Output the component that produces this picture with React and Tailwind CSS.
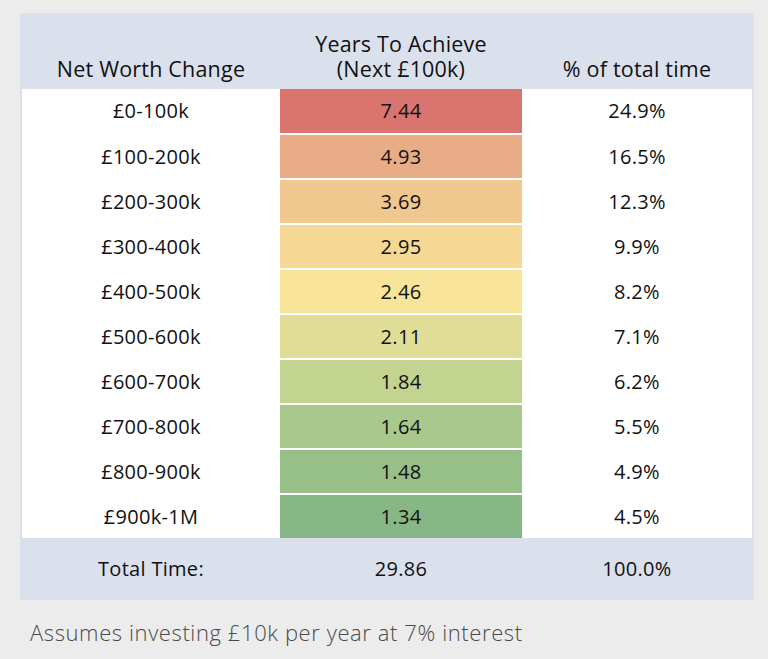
import React from 'react';

const rows = [
  { range: '£0-100k', years: '7.44', pct: '24.9%', color: 'bg-[#d9746f]' },
  { range: '£100-200k', years: '4.93', pct: '16.5%', color: 'bg-[#e8ac87]' },
  { range: '£200-300k', years: '3.69', pct: '12.3%', color: 'bg-[#f0c78e]' },
  { range: '£300-400k', years: '2.95', pct: '9.9%', color: 'bg-[#f5d893]' },
  { range: '£400-500k', years: '2.46', pct: '8.2%', color: 'bg-[#f8e59a]' },
  { range: '£500-600k', years: '2.11', pct: '7.1%', color: 'bg-[#e0de96]' },
  { range: '£600-700k', years: '1.84', pct: '6.2%', color: 'bg-[#c3d390]' },
  { range: '£700-800k', years: '1.64', pct: '5.5%', color: 'bg-[#a9c88b]' },
  { range: '£800-900k', years: '1.48', pct: '4.9%', color: 'bg-[#96c088]' },
  { range: '£900k-1M', years: '1.34', pct: '4.5%', color: 'bg-[#87b784]' },
];

const cols = 'grid grid-cols-[258px_242px_230px]';

export default function App() {
  return (
    <div className="min-h-screen w-full bg-[#ececec] pt-[13px] px-[20px] font-['Open_Sans','Liberation_Sans',sans-serif] text-[#111]">
      <div className="w-[734px] bg-[#dbe0ed] px-[2px]">
        {/* header */}
        <div className={`${cols} h-[76px] items-end pb-[8px] text-[21.5px] tracking-[0.2px] leading-[25px] text-center`}>
          <div>Net Worth Change</div>
          <div className="flex flex-col">
            <span>Years To Achieve</span>
            <span>(Next £100k)</span>
          </div>
          <div>% of total time</div>
        </div>

        {/* body */}
        <div className="flex flex-col gap-[2px] bg-white text-[20px] tracking-[0.3px]">
          {rows.map((r, i) => (
            <div key={r.range} className={`${cols} ${i === 0 ? 'h-[44px]' : 'h-[43px]'} text-center`}>
              <div className="flex items-center justify-center">{r.range}</div>
              <div className={`flex items-center justify-center ${r.color}`}>{r.years}</div>
              <div className="flex items-center justify-center">{r.pct}</div>
            </div>
          ))}
        </div>

        {/* total */}
        <div className={`${cols} h-[62px] items-center text-center text-[20px] tracking-[0.3px]`}>
          <div>Total Time:</div>
          <div>29.86</div>
          <div>100.0%</div>
        </div>
      </div>

      <p className="pl-[10px] pt-[16px] text-[22px] tracking-[0.6px] font-light text-[#4a4a4a]">
        Assumes investing £10k per year at 7% interest
      </p>
    </div>
  );
}
